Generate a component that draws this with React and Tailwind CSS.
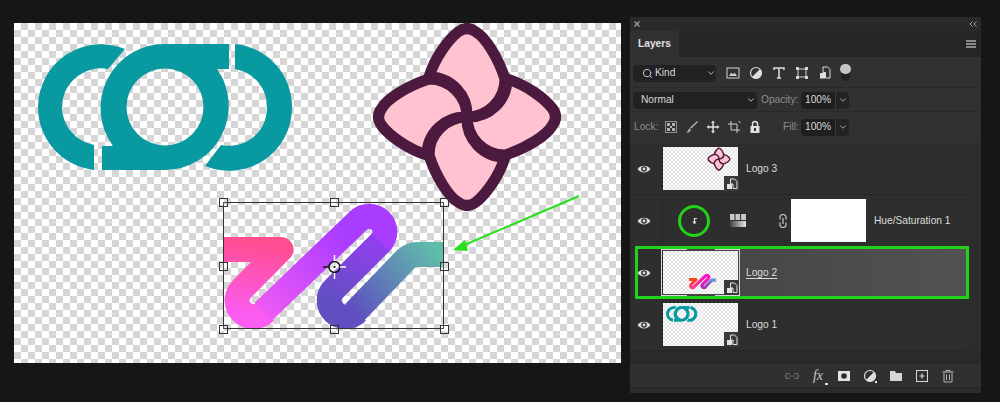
import React from 'react';
import { ChevronDown, Search } from 'lucide-react';

const checker = 'bg-[conic-gradient(#d6d6d6_25%,#ffffff_0_50%,#d6d6d6_0_75%,#ffffff_0)] bg-[length:14px_14px]';
const checkerTiny = 'bg-[conic-gradient(#e2e2e2_25%,#ffffff_0_50%,#e2e2e2_0_75%,#ffffff_0)] bg-[length:4px_4px]';

// artwork, all in page coordinates so the same drawing also fills the thumbnails
const Logo1 = () => (
  <g fill="#089aa0">
    <path fillRule="evenodd" d="M165 44 L229 44 L229 69 L217 69 A64 64 0 0 1 165 170 L102 170 L102 146 L113 146 A64 64 0 0 1 165 44 Z M165 68.5 A38.5 38.5 0 1 0 165 145.5 A38.5 38.5 0 1 0 165 68.5 Z" />
    <path d="M125 49 A63 63 0 0 0 38 107 A63 63 0 0 0 94 170 L94 145 A39 39 0 0 1 62 107 A39 39 0 0 1 108 69 Z" />
    <path d="M235 44 A63 63 0 0 1 292 107 A63 63 0 0 1 205 166 L221 145 A38 38 0 0 0 267 107 A38 38 0 0 0 235 69 Z" />
  </g>
);

const Logo3 = () => (
  <g transform="translate(467 117)">
    {[0, 90, 180, 270].map((a) => (
      <path
        key={a}
        transform={`rotate(${a})`}
        fill="#ffc2d1"
        stroke="#4c1a3e"
        strokeWidth="11"
        strokeLinejoin="round"
        d="M-38 -40 A38 38 0 0 1 0 0 A38 38 0 0 0 38 -38 C31 -60 18 -80 9 -85 Q0 -92 -9 -85 C-18 -78 -32 -60 -38 -40 Z"
      />
    ))}
  </g>
);

const Logo2 = () => (
  <g fill="none" strokeWidth="25">
    <defs>
      <linearGradient id="seg-a" gradientUnits="userSpaceOnUse" x1="250" y1="240" x2="240" y2="315">
        <stop offset="0" stopColor="#ff4d8f" />
        <stop offset="1" stopColor="#fb5cf2" />
      </linearGradient>
      <linearGradient id="seg-b" gradientUnits="userSpaceOnUse" x1="255" y1="320" x2="345" y2="235">
        <stop offset="0" stopColor="#f65cf4" />
        <stop offset="1" stopColor="#a83cff" />
      </linearGradient>
      <linearGradient id="seg-c" gradientUnits="userSpaceOnUse" x1="385" y1="225" x2="335" y2="310">
        <stop offset="0" stopColor="#9c3cf8" />
        <stop offset="1" stopColor="#5f4fc0" />
      </linearGradient>
      <linearGradient id="seg-d" gradientUnits="userSpaceOnUse" x1="355" y1="315" x2="435" y2="250">
        <stop offset="0" stopColor="#5f4fc0" />
        <stop offset="1" stopColor="#5fbdaa" />
      </linearGradient>
    </defs>
    <path stroke="url(#seg-a)" strokeLinejoin="round" d="M224 249.500 H281 L242 289 A15.500 15.500 0 0 0 265 312" />
    <path stroke="url(#seg-b)" d="M263 312 L358 221 A15.500 15.500 0 0 1 380.500 242.500" />
    <path stroke="url(#seg-c)" d="M381 242 L334 289 A15.500 15.500 0 0 0 357 312" />
    <path stroke="url(#seg-d)" strokeLinejoin="round" d="M355 312 L406 259 Q411 254.500 417 254.500 H443" />
  </g>
);

const handles = [
  [223, 202], [334, 202], [444, 202],
  [223, 266], [444, 266],
  [223, 329], [334, 329], [444, 329],
];

const Canvas = () => (
  <div className={`h-[340px] w-[607px] shrink-0 ${checker}`}>
    <svg viewBox="14 23 607 340" className="h-full w-full">
      <Logo1 />
      <Logo3 />
      <Logo2 />
      <rect x="223.500" y="202.500" width="220" height="126" fill="none" stroke="#333333" />
      {handles.map(([x, y]) => (
        <rect key={`${x}-${y}`} x={x - 3.5} y={y - 3.5} width="8" height="8" fill="#ffffff" fillOpacity="0.15" stroke="#333333" />
      ))}
      <circle cx="334.500" cy="267" r="5.500" fill="#ffffff" fillOpacity="0.3" stroke="#111111" strokeWidth="1.500" />
      <path d="M334.500 255 V261 M334.500 273 V279 M340 267 H346" stroke="#ffffff" strokeWidth="1.500" />
      <path d="M323 267 H329" stroke="#111111" strokeWidth="1.500" />
      <circle cx="334.500" cy="267" r="1" fill="#111111" />
      <path d="M579 196 L462 246" stroke="#25e01a" strokeWidth="2" />
      <path d="M453 250 L465 240 L468 251 Z" fill="#25e01a" />
    </svg>
  </div>
);

const Eye = () => (
  <svg viewBox="0 0 14 10" className="h-[10px] w-[14px]">
    <path d="M0.500 5 C3 0.500 11 0.500 13.500 5 C11 9.500 3 9.500 0.500 5 Z" fill="#d8d8d8" />
    <circle cx="7" cy="5" r="2.800" fill="#303030" />
    <circle cx="7" cy="5" r="1.400" fill="#d8d8d8" />
  </svg>
);

const SmartBadge = () => (
  <div className="absolute right-[-1px] bottom-[-1px] flex h-[15px] w-[15px] items-center justify-center bg-[#3a3a3a]">
    <svg viewBox="0 0 12 12" className="h-[12px] w-[12px]">
      <path d="M4.500 1 H8.500 L11 3.500 V10.500 H7 V6 H4.500 Z" fill="none" stroke="#e2e2e2" />
      <rect x="1" y="6" width="5" height="5" fill="#e2e2e2" />
    </svg>
  </div>
);

const Thumb = ({ selected, children, className }) => (
  <div className={`relative h-[43px] w-[75px] shrink-0 ${checkerTiny}`}>
    <svg viewBox="14 23 607 340" className={`h-full w-full ${className || ''}`}>
      {children}
    </svg>
    <SmartBadge />
    {selected && (
      <div className="absolute inset-[-2px] border border-[#d5d5d5]">
        <div className="absolute top-[-1px] left-[25px] h-px w-[28px] bg-[#444444]" />
        <div className="absolute bottom-[-1px] left-[25px] h-px w-[28px] bg-[#444444]" />
      </div>
    )}
  </div>
);

const LayerRow = ({ name, children, selected }) => (
  <div className="relative flex h-[52px] items-center border-b border-[#262626]">
    <div className="flex w-[28px] shrink-0 justify-center"><Eye /></div>
    <div className="ml-[4px] h-full w-px bg-[#292929]" />
    <div className={`flex h-full flex-1 items-center ${selected ? 'bg-gradient-to-r from-[#434343] to-[#525252]' : ''}`}>
      {children}
      <span className={`ml-[8px] text-[#dcdcdc] ${selected ? 'underline underline-offset-2' : ''}`}>{name}</span>
    </div>
    {selected && <div className="absolute top-[-1px] right-[-3px] bottom-[-1px] left-[5px] border-[3px] border-[#22d11a]" />}
  </div>
);

const HueRow = () => (
  <div className="flex h-[52px] items-center border-b border-[#262626]">
    <div className="flex w-[28px] shrink-0 justify-center"><Eye /></div>
    <div className="ml-[4px] h-full w-px bg-[#292929]" />
    <div className="ml-[15px] flex h-[32px] w-[32px] shrink-0 items-center justify-center rounded-full border-[3px] border-[#22d11a]">
      <svg viewBox="0 0 8 8" className="h-[8px] w-[8px]">
        <path d="M7 1.500 H4.500 V6 M3 4.500 L4.500 6.500 L6 4.500" fill="none" stroke="#e0e0e0" strokeWidth="1.200" />
      </svg>
    </div>
    <svg viewBox="0 0 16 13" className="ml-[20px] h-[13px] w-[16px] shrink-0">
      <defs>
        <linearGradient id="hue-ramp" x1="0" y1="0" x2="1" y2="0">
          <stop offset="0" stopColor="#444444" />
          <stop offset="1" stopColor="#e8e8e8" />
        </linearGradient>
      </defs>
      <rect x="0" y="0" width="16" height="6" fill="#c8c8c8" />
      <path d="M5 0 V6 M10.500 0 V6" stroke="#444444" strokeWidth="1.200" />
      <rect x="0" y="7" width="16" height="6" fill="url(#hue-ramp)" />
    </svg>
    <svg viewBox="0 0 8 14" className="ml-[33px] h-[14px] w-[8px] shrink-0">
      <path d="M1 5.500 V3 A3 2.500 0 0 1 7 3 V5.500 M1 8.500 V11 A3 2.500 0 0 0 7 11 V8.500 M4 4 V10" fill="none" stroke="#c8c8c8" strokeWidth="1.200" />
    </svg>
    <div className="ml-[4px] h-[43px] w-[75px] shrink-0 bg-white" />
    <span className="ml-[8px] text-[#dcdcdc]">Hue/Saturation 1</span>
  </div>
);

const ValueBox = () => (
  <div className="flex h-[17px] items-stretch">
    <div className="flex w-[34px] items-center justify-center rounded-l-sm bg-[#1f1f1f] text-[#d8d8d8]">100%</div>
    <div className="flex w-[14px] items-center justify-center rounded-r-sm border-l border-[#3a3a3a] bg-[#232323]">
      <ChevronDown size={10} strokeWidth={2} className="text-[#c8c8c8]" />
    </div>
  </div>
);

const Ic = ({ children, w = 14, h = 14 }) => (
  <svg viewBox={`0 0 ${w} ${h}`} width={w} height={h} className="shrink-0">{children}</svg>
);

const OptionsPanel = () => (
  <div className="bg-[#313131]">
    <div className="flex h-[31px] items-center border-b border-[#2a2a2a] pt-[2px] pl-[3px]">
      <div className="flex h-[17px] w-[83px] items-center rounded-sm bg-[#212121] pl-[9px] text-[#d8d8d8]">
        <Search size={11} strokeWidth={2} className="mr-[2px]" />
        Kind
        <ChevronDown size={10} strokeWidth={2} className="ml-auto" />
      </div>
      <div className="ml-[10px] flex w-[128px] items-center gap-[9px]">
        <Ic>
          <rect x="1" y="2" width="12" height="10" fill="none" stroke="#d4d4d4" />
          <path d="M3 10 L5.500 6.500 L7 8.500 L8.500 6.500 L11 10 Z" fill="#d4d4d4" />
        </Ic>
        <Ic>
          <circle cx="7" cy="7" r="5.500" fill="none" stroke="#dedede" strokeWidth="1.200" />
          <path d="M11 3 A5.500 5.500 0 0 1 3 11 Z" fill="#dedede" />
        </Ic>
        <Ic>
          <path d="M2 4 V2 H12 V4 M7 2 V12 M5 12 H9" fill="none" stroke="#dedede" strokeWidth="1.500" />
        </Ic>
        <Ic>
          <rect x="3" y="3" width="8" height="8" fill="none" stroke="#d4d4d4" />
          <path d="M1 1 H4 V4 H1 Z M10 1 H13 V4 H10 Z M1 10 H4 V13 H1 Z M10 10 H13 V13 H10 Z" fill="#d4d4d4" />
        </Ic>
        <Ic>
          <path d="M5 1 H9.500 L12 3.500 V12 H7.500 V6.500 H5 Z" fill="none" stroke="#dedede" />
          <rect x="2" y="7" width="5" height="5.500" fill="#dedede" />
        </Ic>
        <div className="relative h-[16px] w-[9px] shrink-0 rounded-full bg-[#222222]">
          <div className="absolute top-[-1px] left-[-1px] h-[10px] w-[11px] rounded-full bg-[#c4c4c4]" />
        </div>
      </div>
    </div>
    <div className="flex h-[24px] items-center border-b border-[#2a2a2a] pt-px pl-[3px]">
      <div className="flex h-[17px] w-[124px] items-center rounded-sm bg-[#212121] pl-[8px] text-[#d8d8d8]">
        Normal
        <ChevronDown size={10} strokeWidth={2} className="ml-auto mr-px" />
      </div>
      <span className="ml-[4px] w-[40px] text-[#8c8c8c]">Opacity:</span>
      <ValueBox />
    </div>
    <div className="flex h-[31px] items-center pb-px pl-[4px]">
      <span className="w-[27px] text-[#8c8c8c]">Lock:</span>
      <div className="flex w-[117px] items-center gap-[7px] pl-[3px]">
        <Ic>
          <rect x="1.500" y="1.500" width="11" height="11" fill="none" stroke="#8e8e8e" />
          <path d="M3 3 H6 V6 H3 Z M8 3 H11 V6 H8 Z M3 8 H6 V11 H3 Z M8 8 H11 V11 H8 Z M6 6 H8 V8 H6 Z" fill="#b0b0b0" />
        </Ic>
        <Ic>
          <path d="M12 1 L13 2 L6.500 8.500 L5 7.500 Z" fill="#a8a8a8" />
          <path d="M4.500 8 L6 9.500 C5.500 12 3.500 13 1 13 C2.500 12 3 10 4.500 8 Z" fill="#a8a8a8" />
        </Ic>
        <Ic>
          <path d="M7 0.500 L9 3 H5 Z M7 13.500 L9 11 H5 Z M0.500 7 L3 5 V9 Z M13.500 7 L11 5 V9 Z" fill="#dadada" />
          <path d="M7 3 V11 M3 7 H11" stroke="#dadada" strokeWidth="1.500" />
        </Ic>
        <Ic>
          <path d="M1 4 H10 V13 M4 1 V10 H13" fill="none" stroke="#cfcfcf" />
          <path d="M11.500 1 L13.500 3" stroke="#cfcfcf" />
        </Ic>
        <Ic>
          <path d="M4.500 6 V4 A2.500 2.500 0 0 1 9.500 4 V6" fill="none" stroke="#e0e0e0" strokeWidth="1.500" />
          <path d="M2.500 6 H11.500 V13 H2.500 Z" fill="#e0e0e0" />
          <rect x="6" y="8" width="2" height="3" fill="#313131" />
        </Ic>
      </div>
      <span className="ml-[5px] w-[18px] text-[#8c8c8c]">Fill:</span>
      <ValueBox />
    </div>
  </div>
);

const Footer = () => (
  <div className="flex h-[25px] items-center justify-end gap-[12px] border-y border-[#262626] bg-[#303030] pr-[26px]">
    <div className="-mr-px">
      <Ic w={16}>
        <path d="M6 4.500 H4 A2.500 2.500 0 0 0 4 9.500 H6 M10 4.500 H12 A2.500 2.500 0 0 1 12 9.500 H10 M5 7 H11" fill="none" stroke="#6a6a6a" strokeWidth="1.200" />
      </Ic>
    </div>
    <div className="relative w-[14px] text-center text-[14px] text-[#c8c8c8] italic [font-family:'Liberation_Serif',serif]">
      fx
      <div className="absolute right-[-3px] bottom-[1px] h-[2px] w-[3px] bg-[#e0e0e0]" />
    </div>
    <Ic>
      <rect x="1" y="2" width="12" height="10" fill="#e2e2e2" />
      <circle cx="7" cy="7" r="2.800" fill="#2c2c2c" />
    </Ic>
    <Ic>
      <circle cx="7" cy="7" r="5.500" fill="none" stroke="#dedede" strokeWidth="1.200" />
      <path d="M11 3 A5.500 5.500 0 0 1 3 11 Z" fill="#dedede" />
      <rect x="12" y="12" width="2" height="2" fill="#e6e6e6" />
    </Ic>
    <Ic>
      <path d="M1 2 H6 L7 4 H13 V12 H1 Z" fill="#d6d6d6" />
    </Ic>
    <Ic>
      <rect x="1.500" y="1.500" width="11" height="11" fill="none" stroke="#d6d6d6" />
      <path d="M7 4.500 V9.500 M4.500 7 H9.500" stroke="#d6d6d6" strokeWidth="1.200" />
    </Ic>
    <Ic>
      <path d="M1.500 3 H12.500 M5 3 V1.500 H9 V3 M3 3.500 V13 H11 V3.500 M5.500 5.500 V11 M8.500 5.500 V11" fill="none" stroke="#b4b4b4" />
    </Ic>
  </div>
);

const LayersPanel = () => (
  <div className="ml-[9px] mt-[17px] flex h-[376px] w-[351px] shrink-0 flex-col bg-[#2a2a2a] text-[10.200px] [font-family:'Liberation_Sans',sans-serif]">
    <div className="flex h-[14px] items-center justify-between px-[4px]">
      <svg viewBox="0 0 6 6" className="h-[6px] w-[6px]"><path d="M0.500 0.500 L5.500 5.500 M5.500 0.500 L0.500 5.500" stroke="#a0a0a0" strokeWidth="1.200" /></svg>
      <svg viewBox="0 0 8 6" className="h-[6px] w-[8px]"><path d="M3.500 0.500 L1 3 L3.500 5.500 M7.500 0.500 L5 3 L7.500 5.500" fill="none" stroke="#a0a0a0" /></svg>
    </div>
    <div className="flex h-[26px] items-stretch justify-between bg-[#262626] pr-[5px]">
      <div className="flex w-[49px] items-center justify-center bg-[#313131] font-bold text-[#e2e2e2]">Layers</div>
      <div className="flex flex-col justify-center gap-px">
        <div className="h-[2px] w-[10px] bg-[#8a8a8a]" />
        <div className="h-[2px] w-[10px] bg-[#8a8a8a]" />
        <div className="h-[2px] w-[10px] bg-[#8a8a8a]" />
      </div>
    </div>
    <OptionsPanel />
    <div className="flex">
      <div className="w-[336px] bg-[#2e2e2e]">
        <LayerRow name="Logo 3"><Thumb><Logo3 /></Thumb></LayerRow>
        <HueRow />
        <LayerRow name="Logo 2" selected><Thumb selected className="brightness-90 saturate-150 hue-rotate-[40deg]"><Logo2 /></Thumb></LayerRow>
        <LayerRow name="Logo 1"><Thumb><Logo1 /></Thumb></LayerRow>
      </div>
      <div className="flex-1 bg-[#2c2c2c]" />
    </div>
    <div className="h-[12px] bg-[#2a2a2a]" />
    <Footer />
    <div className="flex-1 bg-[#2b2b2b]" />
  </div>
);

const App = () => (
  <div className="flex h-[402px] w-[1000px] overflow-hidden bg-[#161616] pl-[14px]">
    <div className="mt-[23px]"><Canvas /></div>
    <LayersPanel />
  </div>
);

export default App;
